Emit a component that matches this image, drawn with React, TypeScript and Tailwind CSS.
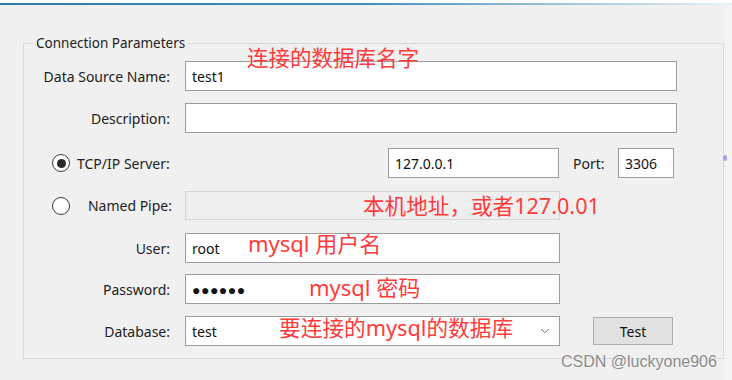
import React from 'react';
import { ChevronDown } from 'lucide-react';

const font = { fontFamily: '"Noto Sans", "Liberation Sans", sans-serif' };

const Field: React.FC<{ className?: string; children?: React.ReactNode }> = ({ className = '', children }) => (
    <div className={`h-[30px] bg-white border-[1.5px] border-[#9c9c9c] flex items-center px-[6px] text-[14px] text-[#111] ${className}`}>
        {children}
    </div>
);

const Radio: React.FC<{ checked?: boolean }> = ({ checked }) => (
    <div className="w-[18px] h-[18px] rounded-full border-[1.5px] border-[#3a3a3a] bg-white flex items-center justify-center">
        {checked && <div className="w-[9px] h-[9px] rounded-full bg-[#2a2a2a]" />}
    </div>
);

const Label: React.FC<{ text: string }> = ({ text }) => (
    <div className="w-[146px] shrink-0 text-right text-[14px] text-[#222]">{text}</div>
);

const Note: React.FC<{ className: string; children: React.ReactNode }> = ({ className, children }) => (
    <div
        className={`absolute text-[#ff3b3b] leading-none whitespace-nowrap ${className}`}
        style={{ fontFamily: '"Noto Sans", "Noto Sans CJK SC", sans-serif' }}
    >
        {children}
    </div>
);

const App: React.FC = () => {
    return (
        <div className="relative w-[732px] h-[380px] bg-[#f0f0f0] overflow-hidden" style={font}>
            <div className="h-[3px] bg-white" />
            <div className="h-[2px] bg-gradient-to-r from-[#2c7bab] via-[#3f8fbd] to-[#e8f2f7]" />

            <div className="flex h-[375px]">
                <div className="w-[23px] shrink-0" />
                <div className="w-[701px] shrink-0 pt-[38px]">
                    <div className="relative h-[316px] border border-[#d8d8d8]">
                        <div className="absolute left-[10px] top-[-11px] px-[2px] bg-[#f0f0f0] text-[13.5px] text-[#222] leading-[20px]">
                            Connection Parameters
                        </div>

                        <div className="pt-[17px]">
                            <div className="flex items-center gap-[15px]">
                                <Label text="Data Source Name:" />
                                <Field className="w-[492px]">test1</Field>
                            </div>

                            <div className="flex items-center gap-[15px] mt-[12px]">
                                <Label text="Description:" />
                                <Field className="w-[492px]" />
                            </div>

                            <div className="flex items-center mt-[15px] h-[30px]">
                                <div className="w-[364px] shrink-0 flex items-center pl-[28px] gap-[7px] text-[14px] text-[#222]">
                                    <Radio checked />
                                    <span>TCP/IP Server:</span>
                                </div>
                                <Field className="w-[171px]">127.0.0.1</Field>
                                <span className="ml-[14px] w-[45px] text-[14px] text-[#222]">Port:</span>
                                <Field className="w-[56px]">3306</Field>
                            </div>

                            <div className="flex items-center mt-[13px] h-[29px] gap-[13px]">
                                <div className="w-[148px] shrink-0 flex items-center pl-[28px] text-[14px] text-[#222]">
                                    <Radio />
                                    <span className="ml-auto">Named Pipe:</span>
                                </div>
                                <div className="w-[375px] h-[29px] border border-[#d6d6d6] bg-[#efefef]" />
                            </div>

                            <div className="flex items-center gap-[15px] mt-[13px]">
                                <Label text="User:" />
                                <Field className="w-[375px]">root</Field>
                            </div>

                            <div className="flex items-center gap-[15px] mt-[11px]">
                                <Label text="Password:" />
                                <Field className="w-[375px] tracking-[0.5px] text-[14px]">●●●●●●</Field>
                            </div>

                            <div className="flex items-center gap-[15px] mt-[12px]">
                                <Label text="Database:" />
                                <Field className="w-[375px] h-[28px] justify-between">
                                    <span>test</span>
                                    <ChevronDown size={14} strokeWidth={1.5} className="text-[#555] mr-[1px]" />
                                </Field>
                                <div className="ml-[18px] w-[80px] h-[28px] bg-[#e1e1e1] border border-[#adadad] flex items-center justify-center text-[14px] text-[#111]">
                                    Test
                                </div>
                            </div>
                        </div>
                    </div>
                </div>
                <div className="flex-1 bg-[#f3f3f3] relative">
                    <div className="absolute left-[-1px] top-[150px] w-[4px] h-[6px] rounded-full bg-[#a7a7ee]" />
                </div>
            </div>

            <Note className="left-[247px] top-[47px] text-[21.5px]">连接的数据库名字</Note>
            <Note className="left-[363px] top-[195px] text-[21.6px]">本机地址，或者127.0.01</Note>
            <Note className="left-[248px] top-[232px] text-[22px]">mysql 用户名</Note>
            <Note className="left-[309px] top-[276px] text-[22px]">mysql 密码</Note>
            <Note className="left-[279px] top-[317px] text-[21.7px]">要连接的mysql的数据库</Note>

            <div
                className="absolute left-[561px] top-[350px] text-[16px] text-[#8a8a8a] whitespace-nowrap"
                style={{ fontFamily: '"Liberation Sans", sans-serif', textShadow: '0 0 2px #fff' }}
            >
                CSDN @luckyone906
            </div>
        </div>
    );
};

export default App;
